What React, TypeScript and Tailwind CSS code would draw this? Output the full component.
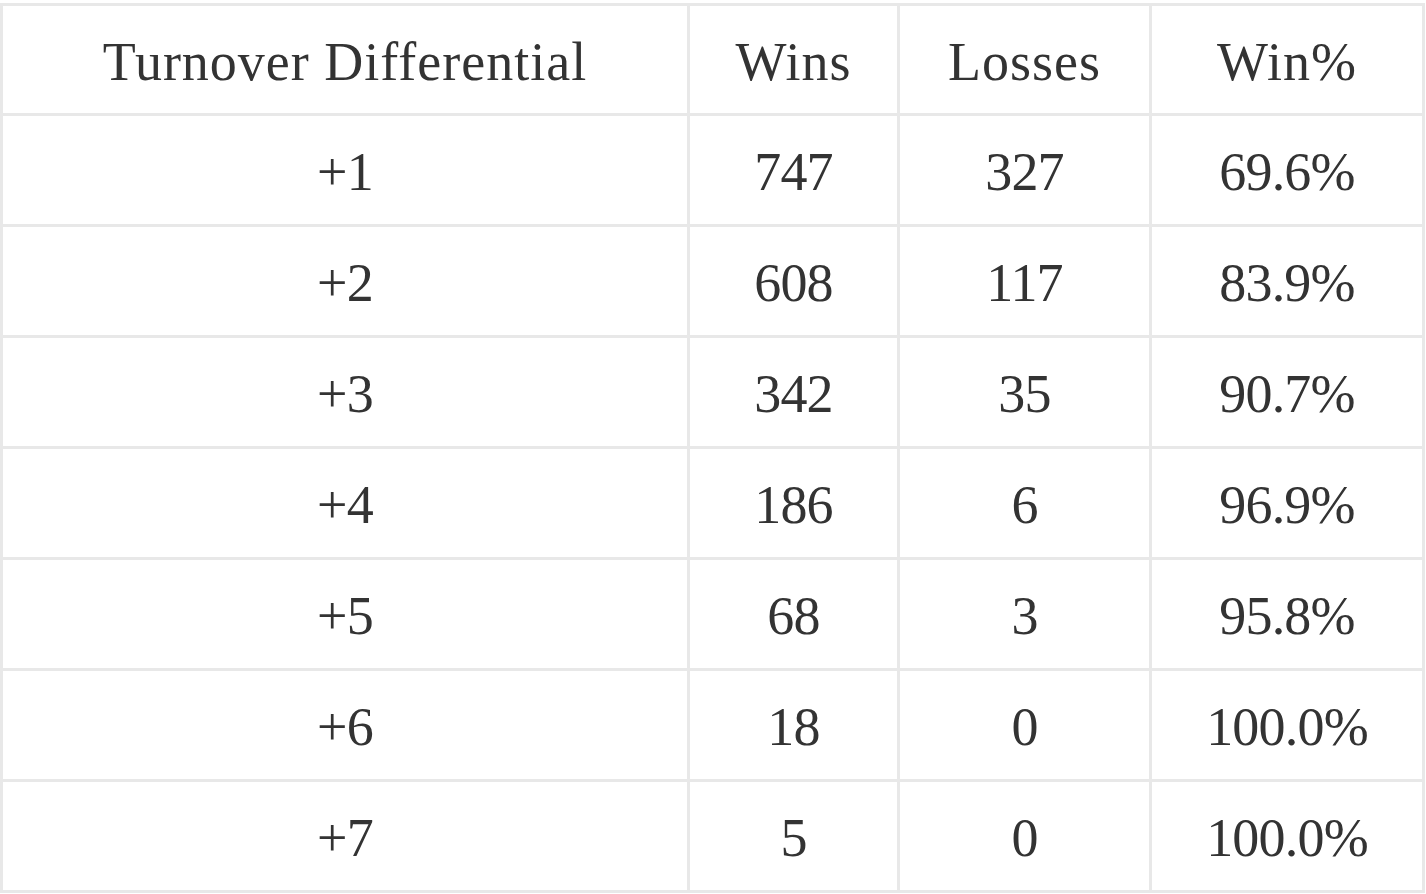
const rows = [
  ["+1", "747", "327", "69.6%"],
  ["+2", "608", "117", "83.9%"],
  ["+3", "342", "35", "90.7%"],
  ["+4", "186", "6", "96.9%"],
  ["+5", "68", "3", "95.8%"],
  ["+6", "18", "0", "100.0%"],
  ["+7", "5", "0", "100.0%"],
];

const header = ["Turnover Differential", "Wins", "Losses", "Win%"];

function Cell({ children, head }: { children: string; head?: boolean }) {
  return (
    <div
      className={`flex items-center justify-center border-r-[3px] border-b-[3px] border-[#e8e8e8] ${
        head ? "h-[110px] tracking-[1px]" : "h-[111px] tracking-[-0.8px]"
      }`}
    >
      <span className="pt-[4px]">{children}</span>
    </div>
  );
}

export default function App() {
  return (
    <div className="min-h-screen bg-white pt-[3px]">
      <div
        className="grid grid-cols-[687px_210px_252px_273px] w-[1425px] border-l-[3px] border-t-[3px] border-[#e8e8e8] text-[#333333] text-[54px] leading-none"
        style={{ fontFamily: '"Liberation Serif", "DejaVu Serif", serif' }}
      >
        {header.map((h) => (
          <Cell key={h} head>
            {h}
          </Cell>
        ))}
        {rows.map((r) =>
          r.map((v, i) => <Cell key={r[0] + i}>{v}</Cell>)
        )}
      </div>
    </div>
  );
}
